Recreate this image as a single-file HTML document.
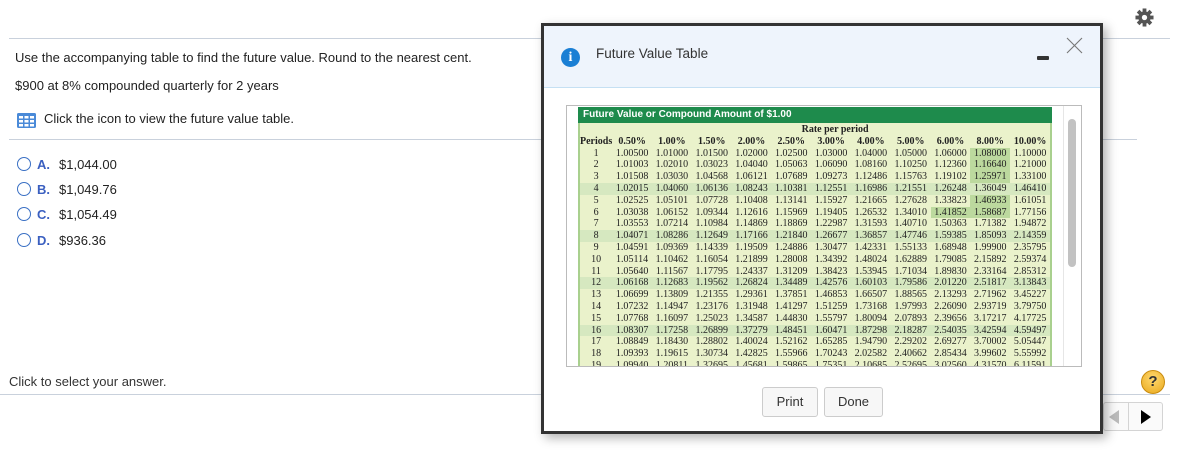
<!DOCTYPE html>
<html><head><meta charset="utf-8"><style>
*{margin:0;padding:0;box-sizing:border-box}
body{width:1177px;height:451px;position:relative;background:#fff;font-family:"Liberation Sans",Arial,sans-serif;color:#222;overflow:hidden}
.a{position:absolute}
.t{font-size:13px;white-space:nowrap}
.hl{height:1px;background:#c9d1dc}
.rad{width:14px;height:14px;border:1.5px solid #3a70c4;border-radius:50%}
.let{color:#3a5fc0;font-weight:bold;font-size:13px}
table{border-collapse:collapse;font-family:"Liberation Serif",serif;font-size:10px;color:#222}
td{height:11.8px;line-height:11.8px;padding:0;text-align:center;white-space:nowrap}
tr.h td{background:#d6e8c0}
td.g{background:#bcd99e}
</style></head><body>
<div class="a hl" style="left:9px;top:38px;width:1161px"></div>
<div class="a hl" style="left:9px;top:139px;width:1128px"></div>
<div class="a hl" style="left:0;top:394px;width:1170px"></div>
<svg class="a" style="left:1135px;top:8px" width="19" height="19" viewBox="0 0 20 20"><g fill="#555"><circle cx="10" cy="10" r="6.5"/><rect x="8" y="0.5" width="4" height="19"/><rect x="0.5" y="8" width="19" height="4"/><rect x="8" y="0.5" width="4" height="19" transform="rotate(45 10 10)"/><rect x="8" y="0.5" width="4" height="19" transform="rotate(-45 10 10)"/></g><circle cx="10" cy="10" r="2.8" fill="#fff"/></svg>
<div class="a t" style="left:15px;top:50px">Use the accompanying table to find the future value. Round to the nearest cent.</div>
<div class="a t" style="left:15px;top:78px">$900 at 8% compounded quarterly for 2 years</div>
<svg class="a" style="left:17px;top:113px" width="19" height="15"><rect width="19" height="15" rx="1.5" fill="#4a8ad8"/><g fill="#fff"><rect x="2" y="3" width="4" height="2.5"/><rect x="7.5" y="3" width="4" height="2.5"/><rect x="13" y="3" width="4" height="2.5"/><rect x="2" y="7" width="4" height="2.5"/><rect x="7.5" y="7" width="4" height="2.5"/><rect x="13" y="7" width="4" height="2.5"/><rect x="2" y="11" width="4" height="2.5"/><rect x="7.5" y="11" width="4" height="2.5"/><rect x="13" y="11" width="4" height="2.5"/></g></svg>
<div class="a t" style="left:44px;top:111px">Click the icon to view the future value table.</div>
<div class="a rad" style="left:17px;top:157px"></div><div class="a let" style="left:37px;top:157px">A.</div><div class="a t" style="left:59px;top:157px">$1,044.00</div>
<div class="a rad" style="left:17px;top:182px"></div><div class="a let" style="left:37px;top:182px">B.</div><div class="a t" style="left:59px;top:182px">$1,049.76</div>
<div class="a rad" style="left:17px;top:207px"></div><div class="a let" style="left:37px;top:207px">C.</div><div class="a t" style="left:59px;top:207px">$1,054.49</div>
<div class="a rad" style="left:17px;top:233px"></div><div class="a let" style="left:37px;top:233px">D.</div><div class="a t" style="left:59px;top:233px">$936.36</div>
<div class="a t" style="left:9px;top:374px;color:#333">Click to select your answer.</div>
<div class="a" style="left:1141px;top:370px;width:24px;height:24px;border-radius:50%;background:radial-gradient(circle at 50% 35%,#ffd970,#e9a81c);border:1px solid #c98c10;text-align:center;font-weight:bold;font-size:15px;line-height:22px;color:#333">?</div>
<div class="a" style="left:1103px;top:402px;width:60px;height:29px;border:1px solid #d4d4d4;border-radius:3px;background:#fafafa"></div>
<div class="a" style="left:1128px;top:402px;width:1px;height:29px;background:#d4d4d4"></div>
<div class="a" style="left:1109px;top:410px;width:0;height:0;border-top:7px solid transparent;border-bottom:7px solid transparent;border-right:10px solid #bbb"></div>
<div class="a" style="left:1141px;top:410px;width:0;height:0;border-top:7px solid transparent;border-bottom:7px solid transparent;border-left:10px solid #000"></div>

<div class="a" style="left:541px;top:23px;width:562px;height:411px;border:3px solid #333;background:#fff;box-shadow:4px 4px 10px rgba(0,0,0,.3)">
 <div class="a" style="left:0;top:0;width:556px;height:62px;background:#eef4fc;border-bottom:1px solid #c5e0f3"></div>
 <div class="a" style="left:17px;top:22px;width:19px;height:19px;border-radius:50%;background:#1a7fd4;color:#fff;font-weight:bold;font-size:14px;line-height:19px;text-align:center;font-family:'Liberation Serif',serif">i</div>
 <div class="a t" style="left:52px;top:20px;color:#333;font-size:13.5px">Future Value Table</div>
 <div class="a" style="left:493px;top:30px;width:12px;height:4px;background:#333;border-radius:1px"></div>
 <svg class="a" style="left:522px;top:11px" width="17" height="17"><path d="M1 1L16 16M16 1L1 16" stroke="#777" stroke-width="1.1"/></svg>
 <div class="a" style="left:22px;top:79px;width:516px;height:262px;border:1px solid #bbb;overflow:hidden">
  <div class="a" style="left:11px;top:1px;width:474px;height:270px;background:#eaf2cb;border-left:2px solid #a9d08e;border-right:2px solid #a9d08e"></div>
  <div class="a" style="left:11px;top:1px;width:474px;height:16px;background:#1e8b4c;color:#fff;font-weight:bold;font-size:10px;line-height:16px;padding-left:5px;font-family:'Liberation Sans Narrow','Liberation Sans',sans-serif">Future Value or Compound Amount of $1.00</div>
  <div class="a" style="left:496px;top:0;width:1px;height:262px;background:#e6e6e6"></div>
  <div class="a" style="left:501px;top:13px;width:8px;height:148px;border-radius:4px;background:#c2c2c2"></div>
  <div class="a" style="left:13px;top:18px;width:470px">
  <table style="width:470px">
   <colgroup><col style="width:32px"><col span="11"></colgroup>
   <tr><td></td><td colspan="11" style="font-weight:bold;padding-left:8px">Rate per period</td></tr>
   <tr style="font-weight:bold"><td>Periods</td><td>0.50%</td><td>1.00%</td><td>1.50%</td><td>2.00%</td><td>2.50%</td><td>3.00%</td><td>4.00%</td><td>5.00%</td><td>6.00%</td><td>8.00%</td><td>10.00%</td></tr>
   <tr><td>1</td><td>1.00500</td><td>1.01000</td><td>1.01500</td><td>1.02000</td><td>1.02500</td><td>1.03000</td><td>1.04000</td><td>1.05000</td><td>1.06000</td><td class="g">1.08000</td><td>1.10000</td></tr>
   <tr><td>2</td><td>1.01003</td><td>1.02010</td><td>1.03023</td><td>1.04040</td><td>1.05063</td><td>1.06090</td><td>1.08160</td><td>1.10250</td><td>1.12360</td><td class="g">1.16640</td><td>1.21000</td></tr>
   <tr><td>3</td><td>1.01508</td><td>1.03030</td><td>1.04568</td><td>1.06121</td><td>1.07689</td><td>1.09273</td><td>1.12486</td><td>1.15763</td><td>1.19102</td><td class="g">1.25971</td><td>1.33100</td></tr>
   <tr class="h"><td>4</td><td>1.02015</td><td>1.04060</td><td>1.06136</td><td>1.08243</td><td>1.10381</td><td>1.12551</td><td>1.16986</td><td>1.21551</td><td>1.26248</td><td class="g">1.36049</td><td>1.46410</td></tr>
   <tr><td>5</td><td>1.02525</td><td>1.05101</td><td>1.07728</td><td>1.10408</td><td>1.13141</td><td>1.15927</td><td>1.21665</td><td>1.27628</td><td>1.33823</td><td class="g">1.46933</td><td>1.61051</td></tr>
   <tr><td>6</td><td>1.03038</td><td>1.06152</td><td>1.09344</td><td>1.12616</td><td>1.15969</td><td>1.19405</td><td>1.26532</td><td>1.34010</td><td class="g">1.41852</td><td class="g">1.58687</td><td>1.77156</td></tr>
   <tr><td>7</td><td>1.03553</td><td>1.07214</td><td>1.10984</td><td>1.14869</td><td>1.18869</td><td>1.22987</td><td>1.31593</td><td>1.40710</td><td>1.50363</td><td>1.71382</td><td>1.94872</td></tr>
   <tr class="h"><td>8</td><td>1.04071</td><td>1.08286</td><td>1.12649</td><td>1.17166</td><td>1.21840</td><td>1.26677</td><td>1.36857</td><td>1.47746</td><td>1.59385</td><td>1.85093</td><td>2.14359</td></tr>
   <tr><td>9</td><td>1.04591</td><td>1.09369</td><td>1.14339</td><td>1.19509</td><td>1.24886</td><td>1.30477</td><td>1.42331</td><td>1.55133</td><td>1.68948</td><td>1.99900</td><td>2.35795</td></tr>
   <tr><td>10</td><td>1.05114</td><td>1.10462</td><td>1.16054</td><td>1.21899</td><td>1.28008</td><td>1.34392</td><td>1.48024</td><td>1.62889</td><td>1.79085</td><td>2.15892</td><td>2.59374</td></tr>
   <tr><td>11</td><td>1.05640</td><td>1.11567</td><td>1.17795</td><td>1.24337</td><td>1.31209</td><td>1.38423</td><td>1.53945</td><td>1.71034</td><td>1.89830</td><td>2.33164</td><td>2.85312</td></tr>
   <tr class="h"><td>12</td><td>1.06168</td><td>1.12683</td><td>1.19562</td><td>1.26824</td><td>1.34489</td><td>1.42576</td><td>1.60103</td><td>1.79586</td><td>2.01220</td><td>2.51817</td><td>3.13843</td></tr>
   <tr><td>13</td><td>1.06699</td><td>1.13809</td><td>1.21355</td><td>1.29361</td><td>1.37851</td><td>1.46853</td><td>1.66507</td><td>1.88565</td><td>2.13293</td><td>2.71962</td><td>3.45227</td></tr>
   <tr><td>14</td><td>1.07232</td><td>1.14947</td><td>1.23176</td><td>1.31948</td><td>1.41297</td><td>1.51259</td><td>1.73168</td><td>1.97993</td><td>2.26090</td><td>2.93719</td><td>3.79750</td></tr>
   <tr><td>15</td><td>1.07768</td><td>1.16097</td><td>1.25023</td><td>1.34587</td><td>1.44830</td><td>1.55797</td><td>1.80094</td><td>2.07893</td><td>2.39656</td><td>3.17217</td><td>4.17725</td></tr>
   <tr class="h"><td>16</td><td>1.08307</td><td>1.17258</td><td>1.26899</td><td>1.37279</td><td>1.48451</td><td>1.60471</td><td>1.87298</td><td>2.18287</td><td>2.54035</td><td>3.42594</td><td>4.59497</td></tr>
   <tr><td>17</td><td>1.08849</td><td>1.18430</td><td>1.28802</td><td>1.40024</td><td>1.52162</td><td>1.65285</td><td>1.94790</td><td>2.29202</td><td>2.69277</td><td>3.70002</td><td>5.05447</td></tr>
   <tr><td>18</td><td>1.09393</td><td>1.19615</td><td>1.30734</td><td>1.42825</td><td>1.55966</td><td>1.70243</td><td>2.02582</td><td>2.40662</td><td>2.85434</td><td>3.99602</td><td>5.55992</td></tr>
   <tr><td>19</td><td>1.09940</td><td>1.20811</td><td>1.32695</td><td>1.45681</td><td>1.59865</td><td>1.75351</td><td>2.10685</td><td>2.52695</td><td>3.02560</td><td>4.31570</td><td>6.11591</td></tr>
  </table>
  </div>
 </div>
 <div class="a" style="left:218px;top:361px;width:56px;height:30px;border:1px solid #ccc;border-radius:3px;background:#f7f7f7;font-size:13px;line-height:28px;text-align:center;color:#333">Print</div>
 <div class="a" style="left:280px;top:361px;width:59px;height:30px;border:1px solid #ccc;border-radius:3px;background:#f7f7f7;font-size:13px;line-height:28px;text-align:center;color:#333">Done</div>
</div>
</body></html>
